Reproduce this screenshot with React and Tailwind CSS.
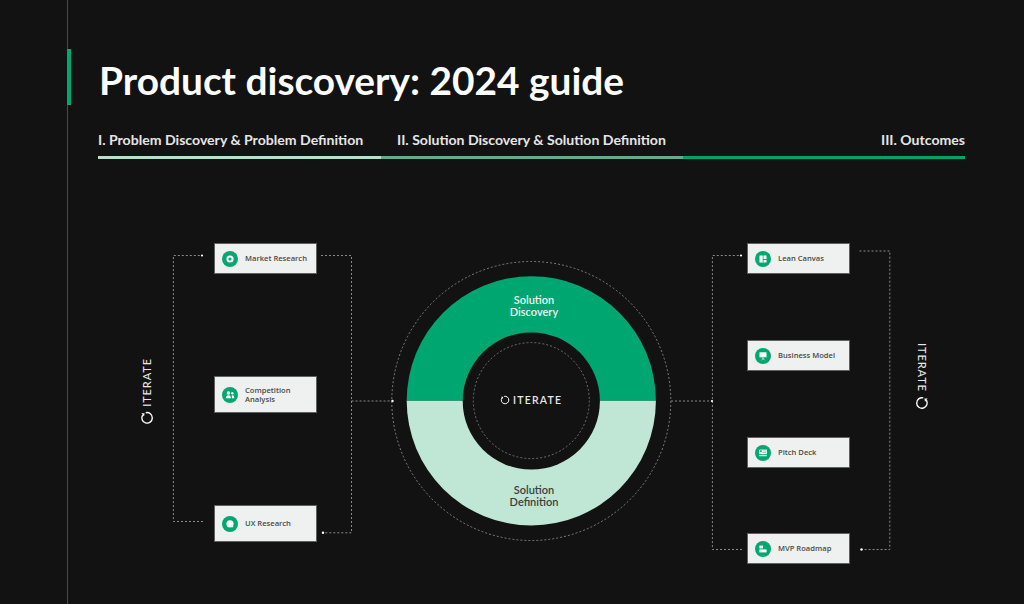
const steps = [
  { label: 'I. Problem Discovery & Problem Definition', bar: 'w-[283px] bg-[#b7dfca]', col: 'w-[283px]' },
  { label: 'II. Solution Discovery & Solution Definition', bar: 'w-[302px] bg-[#69a98c]', col: 'w-[302px] pl-[16px]' },
  { label: 'III. Outcomes', bar: 'flex-1 bg-[#00a36c]', col: 'flex-1 text-right' },
];

const icons = {
  search: (
    <>
      <circle cx="8" cy="8" r="3.6" fill="white" />
      <circle cx="8" cy="8" r="1.6" fill="#00a870" />
      <path d="M9.5 9.8l1.2 1.2" stroke="white" strokeWidth="1" />
    </>
  ),
  users: (
    <>
      <circle cx="6.4" cy="6" r="1.7" fill="white" />
      <path d="M3.8 11.2c0-4 5.2-4 5.2 0z" fill="white" />
      <circle cx="10.3" cy="6.3" r="1.2" fill="white" />
      <path d="M9.8 8.2c1.6-.4 2.6.9 2.5 3h-2.4c0-1.2 0-2.2-.1-3z" fill="white" />
    </>
  ),
  ux: (
    <>
      <circle cx="8" cy="7.8" r="3.6" fill="white" />
      <path d="M9.6 9.6l1.6 1.6" stroke="white" strokeWidth="1.1" />
    </>
  ),
  canvas: (
    <>
      <rect x="4.5" y="4.5" width="3.2" height="7" fill="white" />
      <rect x="8.5" y="4.5" width="3" height="3.6" fill="white" />
      <rect x="8.5" y="9" width="3" height="2.5" fill="white" />
    </>
  ),
  model: (
    <>
      <rect x="4.5" y="4.3" width="7" height="5" fill="white" />
      <path d="M8 9.3v1.6M8 10.6l-1.6 1.6M8 10.6l1.6 1.6" stroke="white" strokeWidth=".7" fill="none" />
    </>
  ),
  pitch: (
    <>
      <rect x="4.2" y="4.6" width="7.6" height="4.6" fill="white" />
      <rect x="5" y="5.3" width="1.8" height="1.6" fill="#00a870" />
      <path d="M7.6 6h3.4M7.6 7.6h3.4" stroke="#00a870" strokeWidth=".5" />
      <rect x="4.2" y="10.2" width="7.6" height="1" fill="white" />
    </>
  ),
  roadmap: (
    <>
      <rect x="4.4" y="4.6" width="3.6" height="2.8" fill="white" />
      <rect x="4.4" y="8.4" width="7.2" height="3" fill="white" />
    </>
  ),
};

const nodes = [
  { label: 'Market Research', icon: 'search', box: 'left-[146px] top-[43px] h-[31px]' },
  { label: 'Competition Analysis', icon: 'users', box: 'left-[146px] top-[176px] h-[37px]' },
  { label: 'UX Research', icon: 'ux', box: 'left-[146px] top-[305px] h-[37px]' },
  { label: 'Lean Canvas', icon: 'canvas', box: 'left-[679px] top-[43px] h-[31px]' },
  { label: 'Business Model', icon: 'model', box: 'left-[679px] top-[140px] h-[31px]' },
  { label: 'Pitch Deck', icon: 'pitch', box: 'left-[679px] top-[237px] h-[31px]' },
  { label: 'MVP Roadmap', icon: 'roadmap', box: 'left-[679px] top-[333px] h-[31px]' },
];

const dotted = { fill: 'none', stroke: '#a8a8a8', strokeWidth: 0.8, strokeDasharray: '2 2' };

function Spin({ className }) {
  return (
    <svg viewBox="0 0 16 16" className={className} fill="none" stroke="white" strokeWidth="1.6">
      <path d="M6.6 2.2A6 6 0 1 1 3 4.8" />
      <path d="M1.6 2.8l3.6.1-.6 3.6z" fill="white" stroke="none" />
    </svg>
  );
}

function Node({ node }) {
  return (
    <div className={`absolute w-[103px] flex items-center gap-[7px] pl-[7px] bg-[#eff0f0] border border-[#5f5f5f] ${node.box}`}>
      <svg viewBox="0 0 16 16" className="w-[16px] h-[16px] shrink-0">
        <circle cx="8" cy="8" r="8" fill="#00a870" />
        {icons[node.icon]}
      </svg>
      <span className="w-[68px] pt-px font-['Open_Sans',sans-serif] text-[7.6px] leading-[9.5px] font-semibold text-[#4a4a4a]">{node.label}</span>
    </div>
  );
}

function Diagram() {
  return (
    <div className="relative flex-1">
      <svg viewBox="68 200 956 404" className="absolute inset-0 w-full h-full">
        {/* left loop */}
        <path d="M203 521.5H173.4V255.5H202" {...dotted} />
        <path d="M321 255.5H351.5V532.8H323" {...dotted} />
        <path d="M351.5 401H392" {...dotted} />
        {/* right loop */}
        <path d="M671 401H712" {...dotted} />
        <path d="M742 549.5H712.4V255.5H741" {...dotted} />
        <path d="M859.5 251H889.8V549.5H862" {...dotted} />
        {/* arrow heads */}
        <g fill="white">
          <circle cx="202" cy="255.5" r="1.1" />
          <circle cx="323" cy="532.8" r="1.2" />
          <circle cx="392.5" cy="401" r="1.2" />
          <circle cx="712" cy="401" r="1.1" />
          <circle cx="741" cy="255.5" r="1.1" />
          <circle cx="861.5" cy="549.5" r="1.2" />
          <circle cx="478" cy="378" r="0.9" />
          <circle cx="584" cy="423.5" r="0.9" />
        </g>
        {/* donut */}
        <circle cx="531.3" cy="401" r="139.5" {...dotted} strokeWidth="0.7" />
        <path d="M406.7 400.8a124.6 124.6 0 0 1 249.2 0z" fill="#00a670" />
        <path d="M406.7 400.8a124.6 124.6 0 0 0 249.2 0z" fill="#c0e6d5" />
        <circle cx="531.3" cy="401" r="68.6" fill="#121212" />
        <circle cx="531.3" cy="400.6" r="58" {...dotted} strokeWidth="0.6" />
      </svg>

      {nodes.map((node) => <Node key={node.label} node={node} />)}

      <p className="absolute left-[416px] top-[94px] w-[100px] text-center text-[11px] leading-[12px] font-semibold text-[#eef8f3]">Solution<br />Discovery</p>
      <p className="absolute left-[416px] top-[284px] w-[100px] text-center text-[11px] leading-[12px] font-semibold text-[#3d3d3d]">Solution<br />Definition</p>

      <div className="absolute left-[432px] top-[193px] flex items-center gap-[3px] text-[10.5px] leading-[14px] font-semibold tracking-[1.2px] text-[#e8e8e8]">
        <Spin className="w-[10px] h-[10px]" />
        <span>ITERATE</span>
      </div>

      {/* side labels */}
      <div className="absolute left-[72px] top-[158px] flex items-center gap-[4px] [writing-mode:vertical-rl] rotate-180">
        <Spin className="w-[14px] h-[14px] rotate-180" />
        <span className="text-[11px] leading-[14px] font-medium tracking-[0.9px] text-[#e8e8e8]">ITERATE</span>
      </div>
      <div className="absolute left-[847px] top-[143px] flex items-center gap-[4px] [writing-mode:vertical-rl]">
        <span className="text-[11px] leading-[14px] font-medium tracking-[0.9px] text-[#e8e8e8]">ITERATE</span>
        <Spin className="w-[14px] h-[14px] -scale-x-100" />
      </div>
    </div>
  );
}

export default function App() {
  return (
    <div className="w-[1024px] h-[604px] overflow-hidden bg-[#121212] font-['Lato',sans-serif]">
      <div className="relative ml-[67px] h-full flex flex-col border-l border-[#4a4a4a]">
        <div className="absolute -left-px top-[49px] w-[3.5px] h-[56px] bg-[#00a870]" />
        <header className="h-[200px] shrink-0 pl-[30px] pr-[59px] pt-[57px]">
          <h1 className="ml-px text-[38.85px] leading-[46px] font-bold text-white whitespace-nowrap">Product discovery: 2024 guide</h1>
          <div className="flex mt-[27px] text-[14.1px] leading-[20px] font-bold text-[#e6e6e6] whitespace-nowrap">
            {steps.map((step) => <span key={step.label} className={step.col}>{step.label}</span>)}
          </div>
          <div className="flex h-[3px] mt-[6px]">
            {steps.map((step) => <div key={step.label} className={step.bar} />)}
          </div>
        </header>
        <Diagram />
      </div>
    </div>
  );
}
